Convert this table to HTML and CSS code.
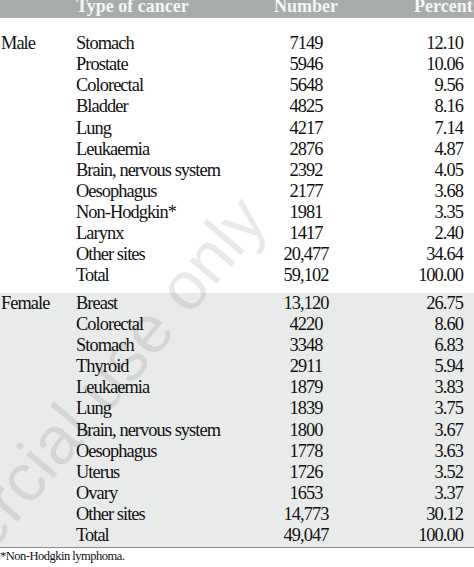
FILE: index.html
```html
<!DOCTYPE html>
<html>
<head>
<meta charset="utf-8">
<link rel="stylesheet" href="styles.css">
</head>
<body>
<div class="page">
  <div class="head">
    <div class="c-group"></div>
    <div class="c-type">Type of cancer</div>
    <div class="c-num">Number</div>
    <div class="c-pct">Percent</div>
  </div>

  <div class="section male">
    <div class="row"><div class="c-group">Male</div><div class="c-type">Stomach</div><div class="c-num">7149</div><div class="c-pct">12.10</div></div>
    <div class="row"><div class="c-group"></div><div class="c-type">Prostate</div><div class="c-num">5946</div><div class="c-pct">10.06</div></div>
    <div class="row"><div class="c-group"></div><div class="c-type">Colorectal</div><div class="c-num">5648</div><div class="c-pct">9.56</div></div>
    <div class="row"><div class="c-group"></div><div class="c-type">Bladder</div><div class="c-num">4825</div><div class="c-pct">8.16</div></div>
    <div class="row"><div class="c-group"></div><div class="c-type">Lung</div><div class="c-num">4217</div><div class="c-pct">7.14</div></div>
    <div class="row"><div class="c-group"></div><div class="c-type">Leukaemia</div><div class="c-num">2876</div><div class="c-pct">4.87</div></div>
    <div class="row"><div class="c-group"></div><div class="c-type">Brain, nervous system</div><div class="c-num">2392</div><div class="c-pct">4.05</div></div>
    <div class="row"><div class="c-group"></div><div class="c-type">Oesophagus</div><div class="c-num">2177</div><div class="c-pct">3.68</div></div>
    <div class="row"><div class="c-group"></div><div class="c-type">Non-Hodgkin*</div><div class="c-num">1981</div><div class="c-pct">3.35</div></div>
    <div class="row"><div class="c-group"></div><div class="c-type">Larynx</div><div class="c-num">1417</div><div class="c-pct">2.40</div></div>
    <div class="row"><div class="c-group"></div><div class="c-type">Other sites</div><div class="c-num">20,477</div><div class="c-pct">34.64</div></div>
    <div class="row"><div class="c-group"></div><div class="c-type">Total</div><div class="c-num">59,102</div><div class="c-pct">100.00</div></div>
  </div>

  <div class="section female">
    <div class="row"><div class="c-group">Female</div><div class="c-type">Breast</div><div class="c-num">13,120</div><div class="c-pct">26.75</div></div>
    <div class="row"><div class="c-group"></div><div class="c-type">Colorectal</div><div class="c-num">4220</div><div class="c-pct">8.60</div></div>
    <div class="row"><div class="c-group"></div><div class="c-type">Stomach</div><div class="c-num">3348</div><div class="c-pct">6.83</div></div>
    <div class="row"><div class="c-group"></div><div class="c-type">Thyroid</div><div class="c-num">2911</div><div class="c-pct">5.94</div></div>
    <div class="row"><div class="c-group"></div><div class="c-type">Leukaemia</div><div class="c-num">1879</div><div class="c-pct">3.83</div></div>
    <div class="row"><div class="c-group"></div><div class="c-type">Lung</div><div class="c-num">1839</div><div class="c-pct">3.75</div></div>
    <div class="row"><div class="c-group"></div><div class="c-type">Brain, nervous system</div><div class="c-num">1800</div><div class="c-pct">3.67</div></div>
    <div class="row"><div class="c-group"></div><div class="c-type">Oesophagus</div><div class="c-num">1778</div><div class="c-pct">3.63</div></div>
    <div class="row"><div class="c-group"></div><div class="c-type">Uterus</div><div class="c-num">1726</div><div class="c-pct">3.52</div></div>
    <div class="row"><div class="c-group"></div><div class="c-type">Ovary</div><div class="c-num">1653</div><div class="c-pct">3.37</div></div>
    <div class="row"><div class="c-group"></div><div class="c-type">Other sites</div><div class="c-num">14,773</div><div class="c-pct">30.12</div></div>
    <div class="row"><div class="c-group"></div><div class="c-type">Total</div><div class="c-num">49,047</div><div class="c-pct">100.00</div></div>
  </div>

  <div class="footnote">*Non-Hodgkin lymphoma.</div>

  <div class="watermark">Non-commercial use only</div>
</div>
</body>
</html>
```

FILE: styles.css
```css
html, body {
  margin: 0;
  padding: 0;
  background: #ffffff;
}

.page {
  position: relative;
  width: 474px;
  height: 567px;
  overflow: hidden;
  font-family: "Liberation Serif", "Times New Roman", serif;
  color: #111111;
}

.head,
.row {
  display: grid;
  grid-template-columns: 76px 184px 92px 111px;
  white-space: nowrap;
}

.head {
  height: 18px;
  background: #a8adac;
  color: #f6f6f6;
  font-weight: bold;
  font-size: 18px;
  line-height: 12px;
  align-items: start;
}

.head .c-num {
  text-align: center;
}

.head .c-pct {
  padding-left: 62px;
  text-align: left;
  overflow: visible;
}

.section {
  font-size: 18.4px;
  letter-spacing: -0.95px;
}

.row {
  height: 21.1px;
  line-height: 21.1px;
}

.c-group {
  padding-left: 1px;
}

.c-num {
  text-align: center;
}

.c-pct {
  text-align: right;
}

.male {
  padding-top: 15.2px;
  padding-bottom: 6.7px;
}

.female {
  background: #e9ebea;
  padding-bottom: 1px;
  border-bottom: 1px solid #8c8f8e;
}

.footnote {
  font-size: 12.5px;
  line-height: 16px;
  letter-spacing: -0.5px;
}

.watermark {
  position: absolute;
  left: -545px;
  top: 170px;
  width: 800px;
  text-align: right;
  font-family: "Liberation Sans", Arial, sans-serif;
  font-size: 68px;
  line-height: 68px;
  color: rgba(0, 0, 0, 0.085);
  transform: rotate(-50deg);
  transform-origin: 100% 39px;
  white-space: nowrap;
  pointer-events: none;
}
```
